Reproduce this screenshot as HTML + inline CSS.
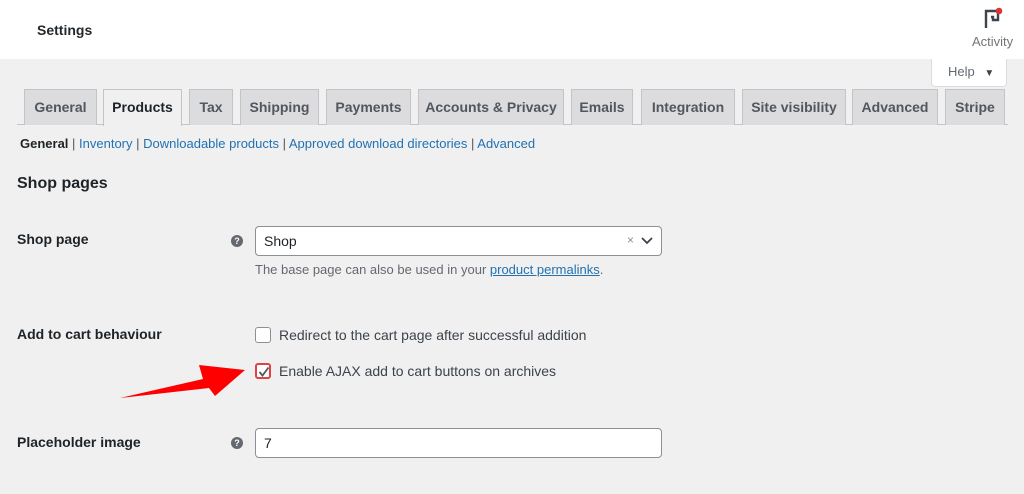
<!DOCTYPE html>
<html><head><meta charset="utf-8"><style>
*{margin:0;padding:0;box-sizing:border-box}
body{width:1024px;height:494px;overflow:hidden;background:#f0f0f1;font-family:"Liberation Sans",sans-serif;color:#1d2327;position:relative;font-size:14px}
.a{position:absolute;white-space:nowrap}
.hdr{left:0;top:0;width:1024px;height:59px;background:#fff}
.tab{position:absolute;top:89px;height:36px;background:#dcdcde;border:1px solid #c3c4c7;border-bottom:none;color:#50575e;font-weight:bold;font-size:14px;text-align:center;line-height:34px;overflow:hidden}
.tab.on{background:#f0f0f1;color:#1d2327;height:37px}
a{color:#2271b1;text-decoration:none}
.lbl{font-weight:bold;font-size:14px}
.q{width:12px;height:12px;border-radius:50%;background:#646970;color:#fff;font-size:9px;font-weight:bold;text-align:center;line-height:12px}
.inp{background:#fff;border:1px solid #8c8f94;border-radius:4px;height:30px;padding-left:8px;line-height:28px;font-size:14px}
.cb{width:16px;height:16px;border:1px solid #8c8f94;border-radius:3px;background:#fff}
</style></head><body>
<div class="a hdr"></div>
<div class="a" style="left:37px;top:22px;font-size:14px;font-weight:bold;color:#23282d">Settings</div>
<svg class="a" style="left:982px;top:7px" width="22" height="22" viewBox="0 0 22 22"><path d="M4 21V4h12v9h-5v-3H9" fill="none" stroke="#3c434a" stroke-width="2.4"/><circle cx="17" cy="4" r="3.3" fill="#d63638"/></svg>
<div class="a" style="left:972px;top:34px;font-size:13px;color:#757575">Activity</div>
<div class="a" style="left:931px;top:59px;width:76px;height:28px;background:#fff;border:1px solid #dcdcde;border-top:none;border-radius:0 0 4px 4px;font-size:13px;color:#646970;line-height:26px;padding-left:16px">Help <span style="font-size:10px;margin-left:6px;color:#3c434a">▼</span></div>
<div class="a" style="left:17px;top:124px;width:991px;height:1px;background:#c3c4c7"></div>
<div class="tab" style="left:24px;width:73px">General</div>
<div class="tab on" style="left:103px;width:79px">Products</div>
<div class="tab" style="left:189px;width:44px">Tax</div>
<div class="tab" style="left:240px;width:79px">Shipping</div>
<div class="tab" style="left:326px;width:85px">Payments</div>
<div class="tab" style="left:418px;width:146px">Accounts &amp; Privacy</div>
<div class="tab" style="left:571px;width:62px">Emails</div>
<div class="tab" style="left:641px;width:94px">Integration</div>
<div class="tab" style="left:742px;width:104px">Site visibility</div>
<div class="tab" style="left:852px;width:86px">Advanced</div>
<div class="tab" style="left:945px;width:60px">Stripe</div>
<div class="a" style="left:20px;top:136px;font-size:13px;color:#50575e"><b style="color:#1d2327">General</b> | <a>Inventory</a> | <a>Downloadable products</a> | <a>Approved download directories</a> | <a>Advanced</a></div>
<div class="a" style="left:17px;top:175px;font-size:16px;font-weight:bold">Shop pages</div>
<div class="a lbl" style="left:17px;top:231px">Shop page</div>
<div class="a q" style="left:231px;top:235px">?</div>
<div class="a inp" style="left:255px;top:226px;width:407px;height:30px">Shop</div>
<div class="a" style="left:627px;top:233px;font-size:12px;color:#8c8f94">×</div>
<svg class="a" style="left:640px;top:236px" width="14" height="10"><path d="M2 2l5 5 5-5" fill="none" stroke="#3c434a" stroke-width="1.8"/></svg>
<div class="a" style="left:255px;top:262px;font-size:13px;color:#646970">The base page can also be used in your <a style="text-decoration:underline">product permalinks</a>.</div>
<div class="a lbl" style="left:17px;top:326px">Add to cart behaviour</div>
<div class="a cb" style="left:255px;top:327px"></div>
<div class="a" style="left:279px;top:327px;font-size:14px;color:#3c434a">Redirect to the cart page after successful addition</div>
<div class="a cb" style="left:255px;top:363px;border:2px solid #e04343"></div>
<svg class="a" style="left:257px;top:365px" width="14" height="14"><path d="M2.5 7l3 3.5 6-8" fill="none" stroke="#50575e" stroke-width="1.8"/></svg>
<div class="a" style="left:279px;top:363px;font-size:14px;color:#3c434a">Enable AJAX add to cart buttons on archives</div>
<svg class="a" style="left:115px;top:360px" width="135" height="45"><path d="M5 38 L88 19 L84 5 L130 10 L100 36 L94 28 Z" fill="#f00" /></svg>
<div class="a lbl" style="left:17px;top:434px">Placeholder image</div>
<div class="a q" style="left:231px;top:437px">?</div>
<div class="a inp" style="left:255px;top:428px;width:407px;height:30px">7</div>
</body></html>
